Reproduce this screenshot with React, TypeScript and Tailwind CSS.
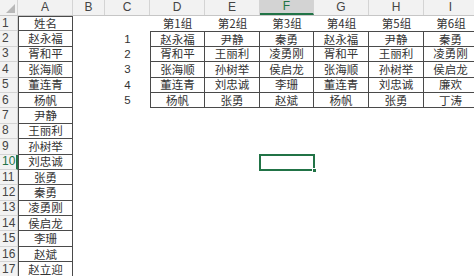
import React from 'react'

const cols = ['A', 'B', 'C', 'D', 'E', 'F', 'G', 'H', 'I']
const widths = ['w-[55px]', 'w-[32px]', 'w-[45px]', 'w-[55px]', 'w-[55px]', 'w-[54px]', 'w-[55px]', 'w-[55px]', 'w-[54px]']

const names = ['姓名', '赵永福', '胥和平', '张海顺', '董连青', '杨帆', '尹静', '王丽利', '孙树举', '刘忠诚', '张勇', '秦勇', '凌勇刚', '侯启龙', '李珊', '赵斌', '赵立迎']

const groups = [
  ['第1组', '第2组', '第3组', '第4组', '第5组', '第6组'],
  ['赵永福', '尹静', '秦勇', '赵永福', '尹静', '秦勇'],
  ['胥和平', '王丽利', '凌勇刚', '胥和平', '王丽利', '凌勇刚'],
  ['张海顺', '孙树举', '侯启龙', '张海顺', '孙树举', '侯启龙'],
  ['董连青', '刘忠诚', '李珊', '董连青', '刘忠诚', '廉欢'],
  ['杨帆', '张勇', '赵斌', '杨帆', '张勇', '丁涛'],
]

function cell(r: number, c: number) {
  // r: 0-based row index (row 1 = 0), c: 0-based column (A = 0)
  let text = ''
  const b: string[] = []
  if (c === 0) {
    text = names[r] ?? ''
    b.push('border-l border-r border-b border-[#4a4a4a]')
    if (r === 0) b.push('border-t')
  }
  if (c === 2 && r >= 1 && r <= 5) text = String(r)
  if (c >= 3 && r <= 5) {
    text = groups[r][c - 3]
    if (r >= 1) {
      b.push('border-r border-b border-[#4a4a4a]')
      if (r === 1) b.push('border-t')
      if (c === 3) b.push('border-l')
    }
  }
  return { text, cls: b.join(' ') }
}

export default function App() {
  const rows = Array.from({ length: 17 }, (_, i) => i)
  return (
    <div className="w-[474px] h-[276px] overflow-hidden bg-white text-[11.5px] leading-[13px] text-[#333]" style={{ fontFamily: '"Noto Sans CJK SC", "Liberation Sans", sans-serif' }}>
      {/* column headers */}
      <div className="flex h-[16px] bg-[#f2f2f2] border-b border-[#c6c6c6]">
        <div className="relative w-[18px] shrink-0 border-r border-[#d4d4d4]">
          <div className="absolute right-[2px] bottom-[2px] w-0 h-0 border-l-[9px] border-l-transparent border-b-[9px] border-b-[#b8b8b8]" />
        </div>
        {cols.map((c, i) => (
          <div
            key={c}
            className={
              'shrink-0 flex items-center justify-center text-[12px] text-[#444] border-r border-[#d4d4d4] ' +
              widths[i] +
              (c === 'F' ? ' bg-[#d3d3d3] border-b-2 border-b-[#217346] text-[#217346]' : '')
            }
            style={{ fontFamily: '"Liberation Sans", sans-serif' }}
          >
            {c}
          </div>
        ))}
      </div>
      {rows.map((r) => (
        <div key={r} className="flex h-[15.4px]">
          <div
            className={
              'w-[18px] shrink-0 flex items-center pl-[2px] text-[12px] text-[#444] bg-[#f2f2f2] border-b border-r border-[#d4d4d4]' +
              (r === 9 ? ' bg-[#d3d3d3] border-r-2 border-r-[#217346] text-[#217346]' : '')
            }
            style={{ fontFamily: '"Liberation Sans", sans-serif' }}
          >
            {r + 1}
          </div>
          {cols.map((c, ci) => {
            const { text, cls } = cell(r, ci)
            const selected = c === 'F' && r === 9
            return (
              <div
                key={c}
                className={'relative shrink-0 flex items-center justify-center whitespace-nowrap ' + widths[ci] + ' ' + cls}
                style={ci === 2 ? { fontFamily: '"Liberation Sans", sans-serif' } : undefined}
              >
                {text}
                {selected && (
                  <>
                    <div className="absolute -left-[1px] -top-[1px] -right-[1px] -bottom-[1px] border-2 border-[#217346]" />
                    <div className="absolute -right-[3px] -bottom-[3px] w-[5px] h-[5px] bg-[#217346] border border-white" />
                  </>
                )}
              </div>
            )
          })}
        </div>
      ))}
    </div>
  )
}
